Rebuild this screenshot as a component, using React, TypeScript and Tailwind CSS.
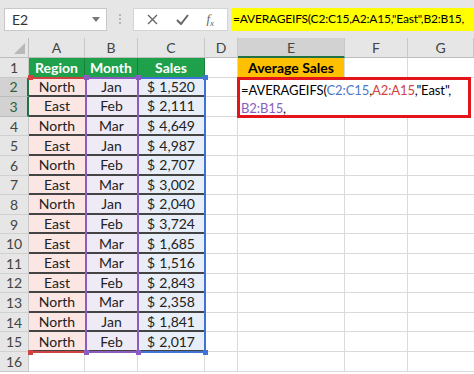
import React from "react";

const rows: [string, string, string][] = [
  ["North", "Jan", "1,520"],
  ["East", "Feb", "2,111"],
  ["North", "Mar", "4,649"],
  ["East", "Jan", "4,987"],
  ["North", "Feb", "2,707"],
  ["East", "Mar", "3,002"],
  ["North", "Jan", "2,040"],
  ["East", "Feb", "3,724"],
  ["East", "Mar", "1,685"],
  ["East", "Mar", "1,516"],
  ["East", "Feb", "2,843"],
  ["North", "Mar", "2,358"],
  ["North", "Jan", "1,841"],
  ["North", "Feb", "2,017"],
];

const font = { fontFamily: "Lato, 'Open Sans', sans-serif" };

function Handle({ cls }: { cls: string }) {
  return <div className={`absolute w-[5px] h-[5px] ${cls}`} />;
}

export default function App() {
  const cols = ["A", "B", "C", "D", "E", "F", "G"];
  return (
    <div className="w-[474px] h-[374px] overflow-hidden bg-white text-[14px] text-[#222]" style={font}>
      {/* formula bar */}
      <div className="h-[38px] bg-[#e6e6e6] flex items-center pl-[4px] gap-0">
        <div className="w-[103px] h-[23px] bg-white border border-[#c8c8c8] flex items-center justify-between pl-[7px] pr-[6px] text-[#333]">
          <span>E2</span>
          <svg width="8" height="5" viewBox="0 0 8 5"><path d="M0 0h8L4 5z" fill="#777" /></svg>
        </div>
        <div className="w-[26px] flex flex-col items-center gap-[2px]">
          <span className="w-[2px] h-[2px] bg-[#b5b5b5]" />
          <span className="w-[2px] h-[2px] bg-[#b5b5b5]" />
          <span className="w-[2px] h-[2px] bg-[#b5b5b5]" />
        </div>
        <div className="w-[95px] h-[23px] bg-white border border-[#d4d4d4] flex items-center justify-around px-[4px]">
          <svg width="11" height="11" viewBox="0 0 11 11"><path d="M1 1l9 9M10 1l-9 9" stroke="#666" strokeWidth="1.4" /></svg>
          <svg width="13" height="11" viewBox="0 0 13 11"><path d="M1 6l4 4 7-9" stroke="#666" strokeWidth="2" fill="none" /></svg>
          <span className="italic text-[#666] text-[13px]" style={{ fontFamily: "'Liberation Serif', serif" }}>f<sub className="text-[9px]">x</sub></span>
        </div>
        <div className="ml-[3px] flex-1 h-[23px] bg-[#ffff00] flex items-center pl-[2px] text-black text-[12px] tracking-[-0.2px] whitespace-nowrap overflow-hidden">
          =AVERAGEIFS(C2:C15,A2:A15,"East",B2:B15,
        </div>
      </div>

      {/* sheet */}
      <div className="relative grid grid-cols-[29px_56px_53px_67px_33px_107px_63px_66px] grid-rows-[20px_repeat(16,19.6px)]">
        {/* header row */}
        <div className="bg-[#e6e6e6] border-r border-b border-[#bdbdbd] relative">
          <svg className="absolute right-[3px] bottom-[3px]" width="11" height="11" viewBox="0 0 11 11"><path d="M11 0v11H0z" fill="#b8b8b8" /></svg>
        </div>
        {cols.map((c) => (
          <div
            key={c}
            className={`flex items-center justify-center text-[#444] border-r border-[#c8c8c8] ${
              c === "E" ? "bg-[#d2d2d2] border-b-2 border-b-[#217346]" : "bg-[#e6e6e6] border-b border-b-[#bdbdbd]"
            }`}
          >
            {c}
          </div>
        ))}

        {/* row 1 */}
        <div className="bg-[#e6e6e6] border-r border-b border-[#c8c8c8] flex items-center justify-center text-[#444]">1</div>
        {["Region", "Month", "Sales"].map((t) => (
          <div key={t} className="bg-[#1fa04a] border-r border-[#17803a] flex items-center justify-center text-white font-bold">
            {t}
          </div>
        ))}
        <div className="border-r border-b border-[#dadada]" />
        <div className="bg-[#ffc000] border-r border-[#dadada] flex items-center justify-center font-bold text-black">Average Sales</div>
        <div className="border-r border-b border-[#dadada]" />
        <div className="border-b border-[#dadada]" />

        {/* data rows */}
        {rows.map(([r, m, s], i) => {
          const n = i + 2;
          const sel = n === 2 || n === 3;
          return (
            <React.Fragment key={n}>
              <div
                className={`flex items-center justify-center border-b ${
                  sel ? "bg-[#d2d2d2] text-[#2d5f3f] border-r-2 border-r-[#217346] border-b-[#bdbdbd]" : "bg-[#e6e6e6] text-[#444] border-r border-r-[#c8c8c8] border-b-[#d0d0d0]"
                }`}
              >
                {n}
              </div>
              <div className="bg-[#fbe6e3] border-b-2 border-[#444] flex items-center justify-center">{r}</div>
              <div className="bg-[#efebf6] border-b-2 border-[#444] flex items-center justify-center">{m}</div>
              <div className="bg-[#e8eef8] border-b-2 border-[#444] flex items-center justify-between pl-[9px] pr-[10px]">
                <span>$</span>
                <span>{s}</span>
              </div>
              <div className="border-r border-b border-[#dadada]" />
              {n === 2 || n === 3 ? (
                <div className="col-span-3" />
              ) : (
                <>
                  <div className="border-r border-b border-[#dadada]" />
                  <div className="border-r border-b border-[#dadada]" />
                  <div className="border-b border-[#dadada]" />
                </>
              )}
            </React.Fragment>
          );
        })}

        {/* row 16 */}
        <div className="bg-[#e6e6e6] border-r border-b border-[#c8c8c8] flex items-center justify-center text-[#444]">16</div>
        <div className="border-r border-b border-[#dadada]" />
        <div className="border-r border-b border-[#dadada]" />
        <div className="border-r border-b border-[#dadada]" />
        <div className="border-r border-b border-[#dadada]" />
        <div className="border-r border-b border-[#dadada]" />
        <div className="border-r border-b border-[#dadada]" />
        <div className="border-b border-[#dadada]" />

        {/* range highlights */}
        <div className="absolute left-[29px] top-[38.6px] w-[57px] h-[276.4px] border-t-2 border-b-2 border-[#d0423f] pointer-events-none" />
        <div className="absolute left-[85px] top-[38.6px] w-[54px] h-[276.4px] border-2 border-[#8a5cc2]" />
        <div className="absolute left-[138px] top-[38.6px] w-[68px] h-[276.4px] border-2 border-l-0 border-[#3f74d6]" />
        <Handle cls="left-[28px] top-[37px] bg-[#d0423f]" />
        <Handle cls="left-[84px] top-[37px] bg-[#8a5cc2]" />
        <Handle cls="left-[136px] top-[37px] bg-[#8a5cc2]" />
        <Handle cls="left-[203px] top-[37px] bg-[#3f74d6]" />
        <Handle cls="left-[28px] top-[312px] bg-[#d0423f]" />
        <Handle cls="left-[84px] top-[312px] bg-[#8a5cc2]" />
        <Handle cls="left-[136px] top-[312px] bg-[#8a5cc2]" />
        <Handle cls="left-[203px] top-[312px] bg-[#3f74d6]" />

        {/* active edit cell E2 */}
        <div className="absolute left-[237px] top-[39px] w-[234px] h-[41px] border-[3px] border-[#e4141b] bg-white pl-[1px] leading-[18px] pt-[1px] text-black text-[13px] tracking-[-0.1px]">
          <div className="whitespace-nowrap">
            =AVERAGEIFS(<span className="text-[#4a78c8]">C2:C15</span>,<span className="text-[#d0423f]">A2:A15</span>,"East",
          </div>
          <div className="whitespace-nowrap">
            <span className="text-[#8a5cc2]">B2:B15</span>,
          </div>
        </div>
      </div>
    </div>
  );
}
